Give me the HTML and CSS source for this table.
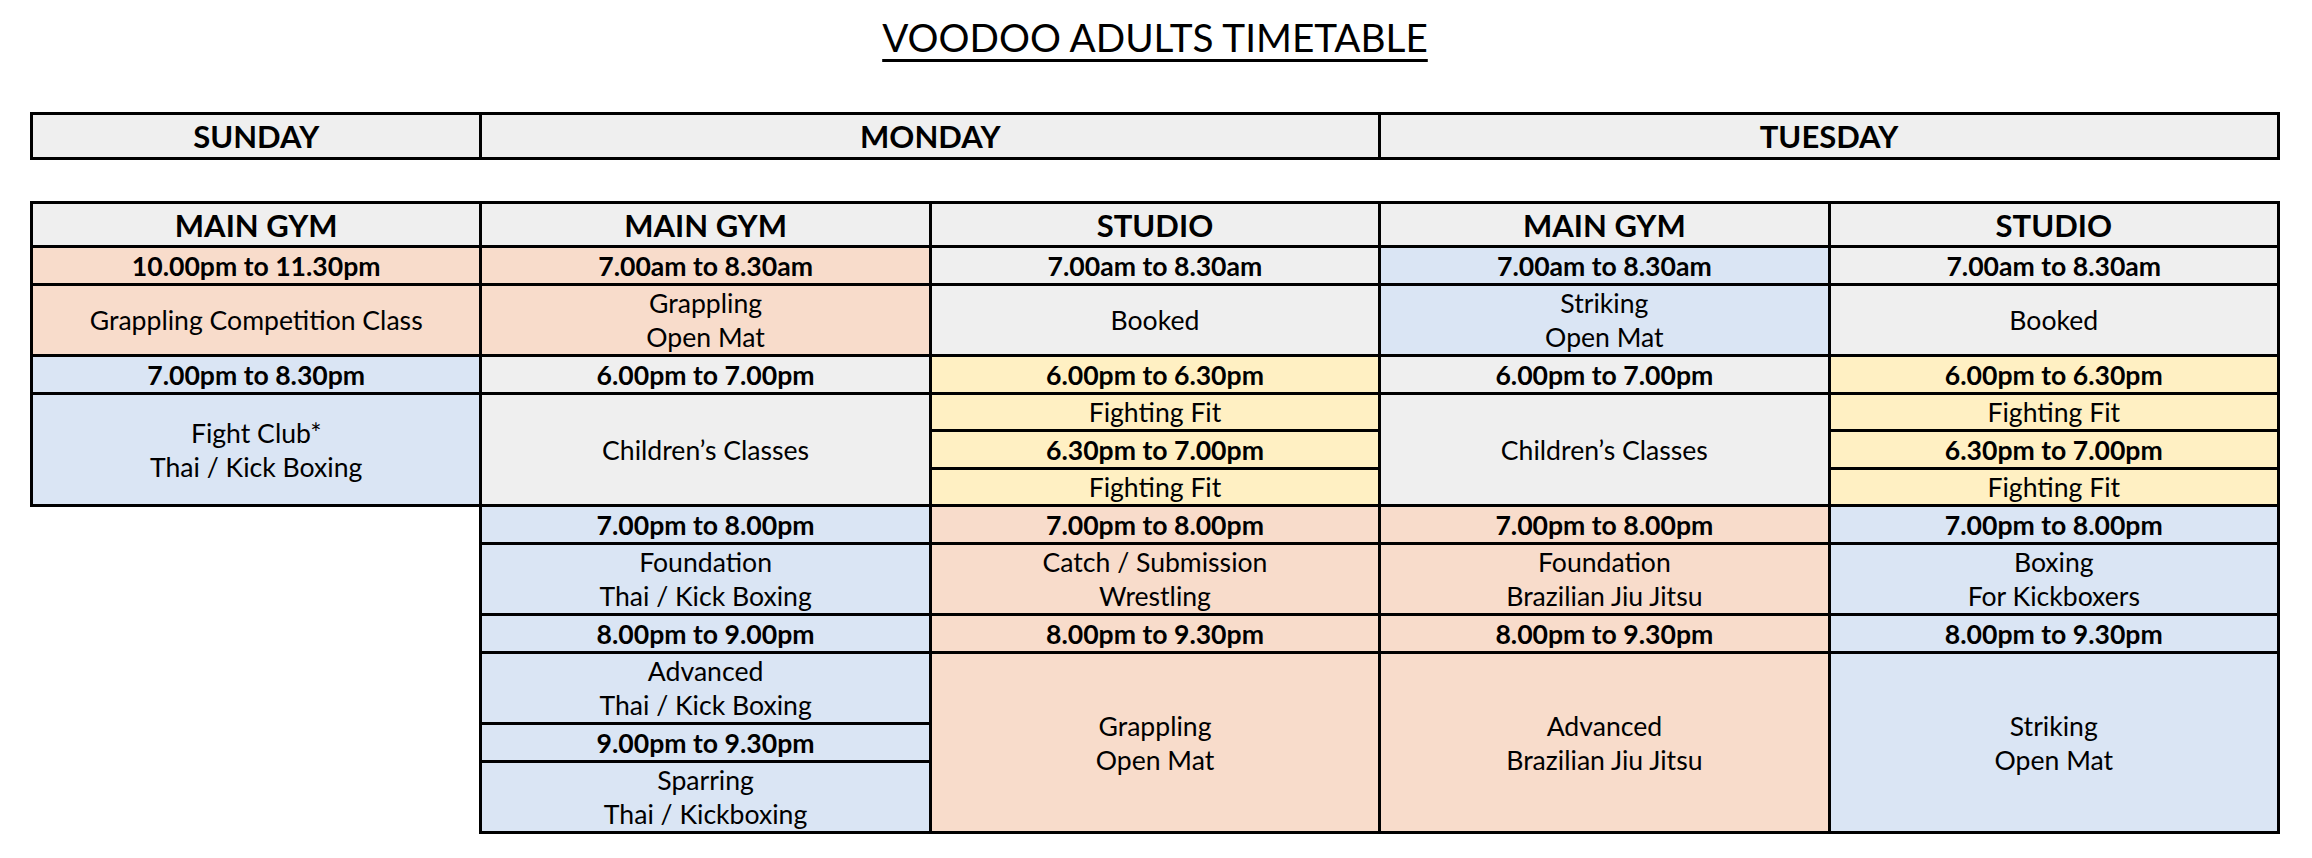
FILE: index.html
```html
<!DOCTYPE html>
<html lang="en">
<head>
<meta charset="utf-8">
<title>Voodoo Adults Timetable</title>
<link rel="stylesheet" href="styles.css">
</head>
<body>
<div class="page">
  <h1 class="title">VOODOO ADULTS TIMETABLE</h1>

  <table class="days">
    <colgroup><col><col span="2"><col span="2"></colgroup>
    <tr>
      <th>SUNDAY</th>
      <th colspan="2">MONDAY</th>
      <th colspan="2">TUESDAY</th>
    </tr>
  </table>

  <table class="grid">
    <colgroup><col><col><col><col><col></colgroup>
    <tr class="h-head">
      <th>MAIN GYM</th><th>MAIN GYM</th><th>STUDIO</th><th>MAIN GYM</th><th>STUDIO</th>
    </tr>
    <tr class="h-time">
      <td class="peach time">10.00pm to 11.30pm</td>
      <td class="peach time">7.00am to 8.30am</td>
      <td class="grey time">7.00am to 8.30am</td>
      <td class="blue time">7.00am to 8.30am</td>
      <td class="grey time">7.00am to 8.30am</td>
    </tr>
    <tr class="h-body">
      <td class="peach">Grappling Competition Class</td>
      <td class="peach">Grappling<br>Open Mat</td>
      <td class="grey">Booked</td>
      <td class="blue">Striking<br>Open Mat</td>
      <td class="grey">Booked</td>
    </tr>
    <tr class="h-time">
      <td class="blue time">7.00pm to 8.30pm</td>
      <td class="grey time">6.00pm to 7.00pm</td>
      <td class="yellow time">6.00pm to 6.30pm</td>
      <td class="grey time">6.00pm to 7.00pm</td>
      <td class="yellow time">6.00pm to 6.30pm</td>
    </tr>
    <tr class="h-ff">
      <td class="blue" rowspan="3">Fight Club*<br>Thai / Kick Boxing</td>
      <td class="grey" rowspan="3">Children’s Classes</td>
      <td class="yellow">Fighting Fit</td>
      <td class="grey" rowspan="3">Children’s Classes</td>
      <td class="yellow">Fighting Fit</td>
    </tr>
    <tr class="h-time">
      <td class="yellow time">6.30pm to 7.00pm</td>
      <td class="yellow time">6.30pm to 7.00pm</td>
    </tr>
    <tr class="h-ff">
      <td class="yellow">Fighting Fit</td>
      <td class="yellow">Fighting Fit</td>
    </tr>
    <tr class="h-time">
      <td class="empty" rowspan="6"></td>
      <td class="blue time">7.00pm to 8.00pm</td>
      <td class="peach time">7.00pm to 8.00pm</td>
      <td class="peach time">7.00pm to 8.00pm</td>
      <td class="blue time">7.00pm to 8.00pm</td>
    </tr>
    <tr class="h-body">
      <td class="blue">Foundation<br>Thai / Kick Boxing</td>
      <td class="peach">Catch / Submission<br>Wrestling</td>
      <td class="peach">Foundation<br>Brazilian Jiu Jitsu</td>
      <td class="blue">Boxing<br>For Kickboxers</td>
    </tr>
    <tr class="h-time">
      <td class="blue time">8.00pm to 9.00pm</td>
      <td class="peach time">8.00pm to 9.30pm</td>
      <td class="peach time">8.00pm to 9.30pm</td>
      <td class="blue time">8.00pm to 9.30pm</td>
    </tr>
    <tr class="h-body">
      <td class="blue">Advanced<br>Thai / Kick Boxing</td>
      <td class="peach" rowspan="3">Grappling<br>Open Mat</td>
      <td class="peach" rowspan="3">Advanced<br>Brazilian Jiu Jitsu</td>
      <td class="blue" rowspan="3">Striking<br>Open Mat</td>
    </tr>
    <tr class="h-time">
      <td class="blue time">9.00pm to 9.30pm</td>
    </tr>
    <tr class="h-body">
      <td class="blue">Sparring<br>Thai / Kickboxing</td>
    </tr>
  </table>
</div>
</body>
</html>
```

FILE: styles.css
```css
html, body {
  margin: 0;
  padding: 0;
  background: #ffffff;
}

body {
  font-family: "Lato", "Liberation Sans", sans-serif;
  color: #000000;
}

.page {
  width: 2250px;
  padding: 18px 0 0 30px;
}

.title {
  margin: 0 0 55px 0;
  font-size: 38.7px;
  line-height: 39px;
  font-weight: 400;
  text-align: center;
  text-decoration: underline;
  text-decoration-thickness: 3px;
  text-underline-offset: 7px;
}

table {
  border-collapse: collapse;
  table-layout: fixed;
  width: 2250px;
}

.days {
  margin-bottom: 41px;
}

.days th {
  height: 42px;
  padding: 0;
  background: #efefef;
  border: 3px solid #000;
  font-size: 31px;
  font-weight: 700;
}

.grid th,
.grid td {
  padding: 0;
  border: 3px solid #000;
  text-align: center;
  vertical-align: middle;
  font-size: 26.6px;
  line-height: 34px;
}

.grid th {
  background: #efefef;
  font-size: 31px;
  font-weight: 700;
}

.h-head { height: 44px; }
.h-time { height: 38px; }
.h-body { height: 71px; }
.h-ff { height: 35.5px; }

.time { font-weight: 700; }

.peach { background: #f8dccb; }
.blue { background: #dae5f4; }
.grey { background: #efefef; }
.yellow { background: #fff0c3; }

.grid td.empty {
  border: none;
  background: transparent;
}
```
